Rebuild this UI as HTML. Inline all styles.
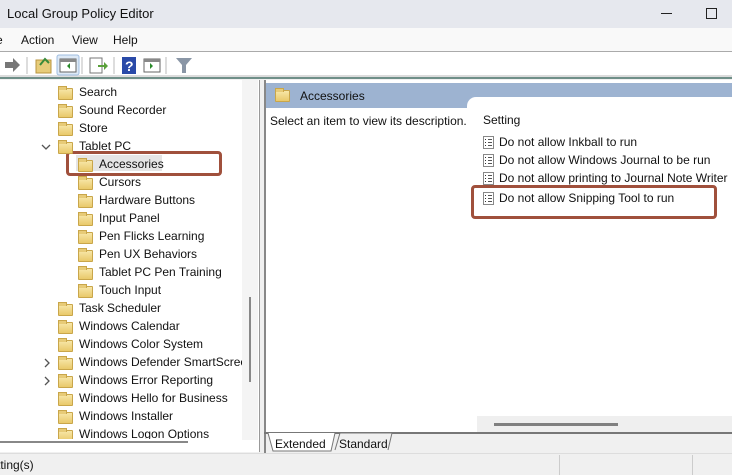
<!DOCTYPE html>
<html><head><style>
*{margin:0;padding:0;box-sizing:border-box}
html,body{width:732px;height:475px;overflow:hidden}
body{background:#f0f0f0;font-family:"Liberation Sans",sans-serif;font-size:12px;color:#111;position:relative}
.a{position:absolute}
.t{position:absolute;white-space:nowrap;font-size:12px}
.f{position:absolute;width:15px;height:12px;background:linear-gradient(#f7e6a8,#e9c96a);border:1px solid #c9a64a;border-radius:1px}
.f:before{content:"";position:absolute;left:-1px;top:-3px;width:7px;height:3px;background:#e7cb78;border:1px solid #c9a64a;border-bottom:none}
.d{position:absolute;width:11px;height:13px;border:1px solid #888;background:#fff}
.d:before{content:"";position:absolute;left:4px;top:2px;width:4px;height:7px;background:repeating-linear-gradient(#555 0 1px,transparent 1px 3px)}
.d:after{content:"";position:absolute;left:1px;top:2px;width:1px;height:7px;background:repeating-linear-gradient(#333 0 1px,transparent 1px 3px)}
</style></head><body>
<div class="a" style="left:0;top:0;width:732px;height:28px;background:#e6e8ee"></div>
<div class="t" style="left:7px;top:6px;font-size:13px">Local Group Policy Editor</div>
<div class="a" style="left:661px;top:13px;width:11px;height:1px;background:#222"></div>
<div class="a" style="left:706px;top:8px;width:11px;height:11px;border:1px solid #222"></div>
<div class="a" style="left:0;top:28px;width:732px;height:24px;background:#f9f9f9;border-bottom:1px solid #aaa"></div>
<div class="t" style="left:-4px;top:33px">e</div>
<div class="t" style="left:21px;top:33px">Action</div>
<div class="t" style="left:72px;top:33px">View</div>
<div class="t" style="left:113px;top:33px">Help</div>
<div class="a" style="left:0;top:52px;width:732px;height:25px;background:#fff;border-bottom:2px solid #dcdcdc"></div>
<div class="a" style="left:0;top:77px;width:732px;height:2px;background:#6f8f88"></div>
<svg class="a" style="left:0;top:53px" width="200" height="24">
<path d="M5 9h8V5l7 7-7 7v-4H5z" fill="#777"/>
<line x1="27" y1="4" x2="27" y2="21" stroke="#bbb"/>
<rect x="36" y="7" width="15" height="13" fill="#e7cc7a" stroke="#b8953f"/><path d="M40 12l5-6 4 4" stroke="#3a8a3a" stroke-width="2" fill="none"/>
<rect x="57" y="2" width="22" height="20" fill="#dde9f6" stroke="#9fbde0" rx="2"/>
<rect x="60" y="6" width="16" height="13" fill="#fff" stroke="#666"/><rect x="60" y="6" width="16" height="3" fill="#888"/><path d="M70 10l-3 3 3 3z" fill="#2a8a2a"/>
<line x1="82" y1="4" x2="82" y2="21" stroke="#bbb"/>
<rect x="90" y="5" width="12" height="15" fill="#fff" stroke="#777"/><path d="M98 12h6v-3l4 4-4 4v-3h-6z" fill="#5aa03a"/>
<line x1="114" y1="4" x2="114" y2="21" stroke="#bbb"/>
<rect x="122" y="4" width="14" height="17" fill="#2a4aa8"/><text x="125" y="18" fill="#fff" font-size="14" font-weight="bold" font-family="Liberation Sans">?</text>
<rect x="144" y="6" width="16" height="13" fill="#fff" stroke="#666"/><rect x="144" y="6" width="16" height="3" fill="#888"/><path d="M150 10l3 3-3 3z" fill="#2a8a2a"/>
<line x1="166" y1="4" x2="166" y2="21" stroke="#bbb"/>
<path d="M176 5h16l-6 7v8h-4v-8z" fill="#8a96a6"/>
</svg>
<div class="a" style="left:0;top:80px;width:260px;height:372px;background:#fff;border-right:1px solid #999"></div>
<div class="a" style="left:242px;top:80px;width:16px;height:360px;background:#f4f4f4"></div>
<div class="a" style="left:249px;top:297px;width:2px;height:85px;background:#888"></div>
<div class="a" style="left:66px;top:151px;width:156px;height:25px;border:3px solid #a0503c;border-radius:4px"></div>
<div class="a" style="left:76px;top:155px;width:86px;height:16px;background:#e5e5e5"></div>
<div class="a" style="left:0;top:80px;width:242px;height:359px;overflow:hidden"><div id="tree" class="a" style="left:0;top:-80px;width:242px;height:440px"></div></div>
<div class="a" style="left:0;top:440px;width:259px;height:12px;background:#fff"></div>
<div class="a" style="left:0;top:441px;width:188px;height:2px;background:#888"></div>
<div class="a" style="left:264px;top:80px;width:468px;height:373px;background:#fff;border-left:2px solid #888"></div>
<div class="a" style="left:266px;top:83px;width:466px;height:25px;background:#9db3d1"></div>
<div class="a" style="left:467px;top:97px;width:265px;height:20px;background:#fff;border-top-left-radius:9px"></div>
<div class="f" style="left:275px;top:90px"></div>
<div class="t" style="left:300px;top:89px">Accessories</div>
<div class="t" style="left:270px;top:114px">Select an item to view its description.</div>
<div class="t" style="left:483px;top:113px">Setting</div>
<div class="d" style="left:483px;top:136px"></div><div class="t" style="left:499px;top:135px">Do not allow Inkball to run</div>
<div class="d" style="left:483px;top:154px"></div><div class="t" style="left:499px;top:153px">Do not allow Windows Journal to be run</div>
<div class="d" style="left:483px;top:172px"></div><div class="t" style="left:499px;top:171px">Do not allow printing to Journal Note Writer</div>
<div class="d" style="left:483px;top:192px"></div><div class="t" style="left:499px;top:191px">Do not allow Snipping Tool to run</div>
<div class="a" style="left:471px;top:185px;width:246px;height:34px;border:3px solid #a0503c;border-radius:4px"></div>
<div class="a" style="left:477px;top:416px;width:255px;height:17px;background:#efefef"></div>
<div class="a" style="left:494px;top:423px;width:124px;height:3px;background:#808080"></div>
<div class="a" style="left:264px;top:432px;width:468px;height:2px;background:#777"></div>
<div class="a" style="left:266px;top:434px;width:466px;height:19px;background:#f0f0f0"></div>
<svg class="a" style="left:264px;top:432px" width="140" height="21"><path d="M4 1l5 18h58l4-18" fill="#fff" stroke="#777"/><path d="M71 18l5-17h52l-4 17" fill="#f0f0f0" stroke="#777"/></svg>
<div class="t" style="left:275px;top:437px">Extended</div>
<div class="t" style="left:339px;top:437px">Standard</div>
<div class="a" style="left:0;top:453px;width:732px;height:22px;background:#f0f0f0;border-top:1px solid #ddd"></div>
<div class="a" style="left:559px;top:455px;width:1px;height:20px;background:#ccc"></div>
<div class="a" style="left:692px;top:455px;width:1px;height:20px;background:#ccc"></div>
<div class="t" style="left:-3px;top:458px">tting(s)</div>
<script>
var items=[["Search",0],["Sound Recorder",0],["Store",0],["Tablet PC",0,"v"],["Accessories",1],["Cursors",1],["Hardware Buttons",1],["Input Panel",1],["Pen Flicks Learning",1],["Pen UX Behaviors",1],["Tablet PC Pen Training",1],["Touch Input",1],["Task Scheduler",0],["Windows Calendar",0],["Windows Color System",0],["Windows Defender SmartScree",0,">"],["Windows Error Reporting",0,">"],["Windows Hello for Business",0],["Windows Installer",0],["Windows Logon Options",0]];
var h="";items.forEach(function(it,i){var y=85+i*18;var x=it[1]?78:58;
h+='<div class="f" style="left:'+x+'px;top:'+(y+3)+'px"></div><div class="t" style="left:'+(x+21)+'px;top:'+y+'px">'+it[0]+'</div>';
if(it[2]=="v")h+='<svg class="a" style="left:41px;top:'+(y+3)+'px" width="10" height="10"><path d="M1 3l4 4 4-4" stroke="#555" stroke-width="1.3" fill="none"/></svg>';
else if(it[2])h+='<svg class="a" style="left:42px;top:'+(y+3)+'px" width="10" height="10"><path d="M3 1l4 4-4 4" stroke="#555" stroke-width="1.3" fill="none"/></svg>';});
document.getElementById("tree").innerHTML=h;
</script>
</body></html>
